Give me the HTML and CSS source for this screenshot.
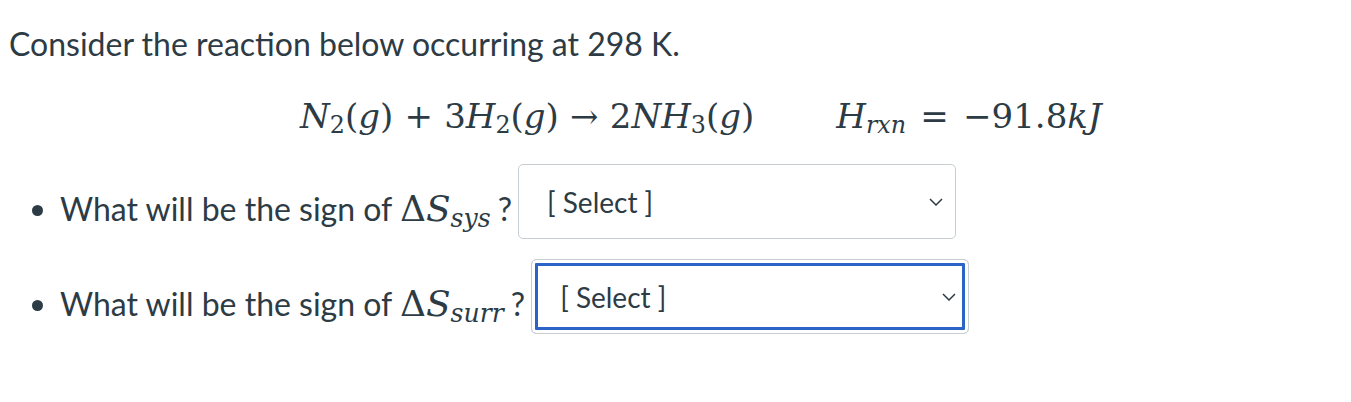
FILE: index.html
```html
<!DOCTYPE html>
<html lang="en">
<head>
<meta charset="utf-8">
<title>Reaction question</title>
<link rel="stylesheet" href="styles.css">
</head>
<body>
<div class="page">
  <p class="intro">Consider the reaction below occurring at 298 K.</p>
  <div class="equation">
    <span class="math lhs"><i>N</i><sub>2</sub>(<i>g</i>)<span class="op">+</span>3<i>H</i><sub>2</sub>(<i>g</i>)<span class="op">→</span>2<i>N</i><i>H</i><sub>3</sub>(<i>g</i>)</span>
    <span class="math rhs"><i>H</i><sub><i>rxn</i></sub><span class="op">=</span>−91.8<i>k</i><i>J</i></span>
  </div>
  <ul class="questions">
    <li class="question">
      <span class="qtext">What will be the sign of <span class="math inline">Δ<i>S</i><sub><i>sys</i></sub></span>?</span>
      <span class="select">
        <span class="select-label">[ Select ]</span>
        <svg class="chevron" width="14" height="8" viewBox="0 0 14 8"><polyline points="1,1 7,7 13,1" fill="none" stroke="#2d3b45" stroke-width="1.5"/></svg>
      </span>
    </li>
    <li class="question">
      <span class="qtext">What will be the sign of <span class="math inline">Δ<i>S</i><sub><i>surr</i></sub></span>?</span>
      <span class="select focused">
        <span class="select-label">[ Select ]</span>
        <svg class="chevron" width="14" height="8" viewBox="0 0 14 8"><polyline points="1,1 7,7 13,1" fill="none" stroke="#2d3b45" stroke-width="1.5"/></svg>
      </span>
    </li>
  </ul>
</div>
</body>
</html>
```

FILE: styles.css
```css
html, body {
  margin: 0;
  padding: 0;
  background: #ffffff;
}

body {
  padding: 8px 9px;
  font-family: Lato, "Liberation Sans", sans-serif;
  font-size: 32px;
  color: #2d3b45;
}

.intro {
  margin: 15px 0 0 0;
  line-height: 42px;
}

.equation {
  display: flex;
  align-items: baseline;
  gap: 82px;
  margin: 30px 0 0 291px;
  height: 42px;
  line-height: 42px;
}

.math {
  font-family: "DejaVu Serif", "Liberation Serif", serif;
  font-size: 34px;
  color: #2d3b45;
}

.math.inline {
  font-size: 36px;
  margin-right: 7px;
}

.math i {
  font-style: italic;
}

.math sub {
  font-size: 0.7em;
  line-height: 0;
  vertical-align: -0.22em;
}

.op {
  margin: 0 0.33em;
}

.rhs .op {
  margin: 0 0.42em;
}

.questions {
  list-style: disc;
  margin: 0;
  padding: 0 0 0 51px;
}

.question {
  display: flex;
  align-items: center;
  gap: 6px;
  margin-top: 27px;
}

.question + .question {
  margin-top: 20px;
}

.qtext {
  display: list-item;
  padding-top: 14px;
  line-height: 42px;
}

.select {
  display: flex;
  align-items: center;
  justify-content: space-between;
  box-sizing: border-box;
  width: 438px;
  height: 75px;
  padding: 0 12px 0 28px;
  border: 1px solid #c7cdd1;
  border-radius: 5px;
  background: #ffffff;
}

.select.focused {
  box-shadow: inset 0 0 0 3px #ffffff, inset 0 0 0 6px #2b64c6;
}

.select-label {
  font-size: 28px;
  color: #2d3b45;
}

.chevron {
  display: block;
}
```
